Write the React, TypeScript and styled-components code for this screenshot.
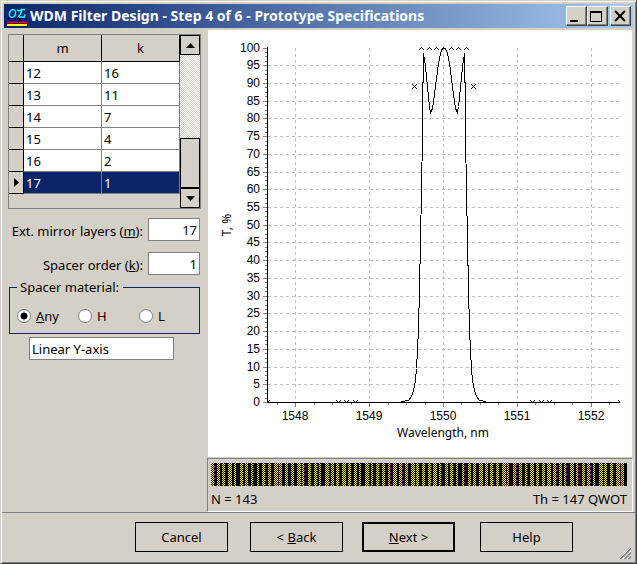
import React, { useState } from "react";
import styled, { createGlobalStyle, css } from "styled-components";

const face = "#d4d0c8";
const shade = "#808080";
const navy = "#0a246a";
const uiFont = `"Noto Sans", "DejaVu Sans", sans-serif`;

const GlobalStyle = createGlobalStyle`
  * { box-sizing: border-box; }
  body { margin: 0; background: ${face}; font: 13px/16px ${uiFont}; color: #000; }
  button, input { font: inherit; color: inherit; }
`;

const Frame = styled.div`
  min-height: 100vh;
  display: flex;
  flex-direction: column;
  padding: 3px 1px 1px 3px;
  border: 1px solid;
  border-color: ${face} #404040 #404040 ${face};
  background: ${face};
  box-shadow: inset 1px 1px #fff, inset -1px -1px ${shade};
`;

const TitleBar = styled.header`
  display: flex;
  align-items: center;
  height: 24px;
  margin-right: 2px;
  padding: 0 2px 0 3px;
  background: linear-gradient(to right, ${navy}, #a6caf0);
`;

const AppIcon = styled.svg`
  width: 20px;
  height: 20px;
  margin-right: 3px;
`;

const Title = styled.h1`
  flex: 1;
  margin: 0;
  color: #fff;
  font: bold 14px/20px ${uiFont};
  white-space: nowrap;
`;

const CaptionButton = styled.button<{ $apart?: boolean }>`
  width: 21px;
  height: 20px;
  margin-left: ${(p) => (p.$apart ? 2 : 0)}px;
  padding: 0;
  border: 1px solid;
  border-color: #fff #404040 #404040 #fff;
  background: ${face};
  box-shadow: inset -1px -1px ${shade};
  svg { display: block; }
`;

const Body = styled.main`
  flex: 1;
  display: flex;
  padding-top: 2px;
  margin-right: 2px;
`;

const SidePanel = styled.section`
  flex: 0 0 203px;
  padding: 4px 6px 0 4px;
`;

const GridBox = styled.div`
  display: flex;
  height: 175px;
  border: 1px solid ${shade};
`;

const LayerTable = styled.table`
  flex: 1;
  align-self: flex-start;
  table-layout: fixed;
  border-collapse: separate;
  border-spacing: 0;
`;

const HeadCell = styled.th<{ $mark?: boolean }>`
  width: ${(p) => (p.$mark ? "15px" : "auto")};
  height: 27px;
  padding: 0;
  border: solid #000;
  border-width: 0 1px 1px 0;
  font-weight: normal;
`;

const MarkCell = styled.td`
  height: 22px;
  padding: 0 0 0 5px;
  border: solid #000;
  border-width: 0 1px 1px 0;
  svg { display: block; }
`;

const Row = styled.tr<{ $selected: boolean }>`
  background: ${(p) => (p.$selected ? navy : "#fff")};
  color: ${(p) => (p.$selected ? "#fff" : "#000")};
  ${MarkCell} { background: ${face}; }
`;

const ValueCell = styled.td`
  padding: 0 2px;
  border: solid ${shade};
  border-width: 0 1px 1px 0;
`;

const ScrollBar = styled.div`
  display: flex;
  flex-direction: column;
  width: 20px;
  background: repeating-conic-gradient(#fff 0 25%, ${face} 0 50%) 0 0 / 2px 2px;
`;

const ScrollButton = styled.button`
  display: grid;
  place-items: center;
  height: 20px;
  padding: 0;
  border: 1px solid #000;
  background: ${face};
`;

const Thumb = styled.div`
  height: 50px;
  margin-top: auto;
  border: 1px solid #000;
  background: ${face};
`;

const Field = styled.label`
  display: flex;
  justify-content: flex-end;
  align-items: center;
  gap: 5px;
  margin: 9px 1px 0 0;
  & + & { margin-top: 11px; }
  span { padding-top: 3px; }
`;

const TextBox = styled.input<{ $wide?: boolean }>`
  height: 23px;
  padding: 0 2px;
  border: 1px solid ${shade};
  border-radius: 0;
  background: #fff;
  ${(p) =>
    p.$wide
      ? css`width: 145px; margin: 3px 0 0 21px;`
      : css`width: 52px; text-align: right;`}
`;

const Group = styled.fieldset`
  display: flex;
  min-width: 0;
  height: 55px;
  margin: 4px 1px 0 1px;
  padding: 13px 0 0 7px;
  border: 1px solid ${navy};
`;

const Legend = styled.legend`
  padding: 0 4px 0 3px;
`;

const Choice = styled.label`
  display: flex;
  align-items: center;
  gap: 5px;
  width: 61px;
  height: 16px;
  &:last-child { width: 50px; }
`;

const Radio = styled.input`
  appearance: none;
  width: 14px;
  height: 14px;
  margin: 0;
  border: 1px solid ${shade};
  border-radius: 50%;
  background: #fff;
  &:checked { background: radial-gradient(circle, #000 3px, #fff 4px); }
`;

const MainPanel = styled.section`
  flex: 1;
  display: flex;
  flex-direction: column;
  min-width: 0;
`;

const ChartArea = styled.div`
  flex: 1;
  margin: 0 1px;
  background: #fff;
`;

const Chart = styled.svg`
  display: block;
  width: 100%;
  font: 12px "Liberation Sans", sans-serif;
`;

const AxisTitle = styled.text`
  font: 12px ${uiFont};
`;

const StackPanel = styled.div`
  margin-top: 1px;
  padding: 4px 5px 2px 3px;
  height: 54px;
  border: solid;
  border-width: 1px;
  border-color: ${shade} #fff #fff ${shade};
`;

const Stack = styled.svg`
  display: block;
  width: 100%;
  height: 23px;
`;

const StackInfo = styled.div`
  display: flex;
  justify-content: space-between;
  margin-top: 5px;
`;

const Footer = styled.footer`
  display: flex;
  height: 50px;
  margin-left: -2px;
  padding: 9px 0 0 133px;
  border-top: 1px solid ${shade};
`;

const Command = styled.button<{ $gap: number; $default?: boolean }>`
  width: 93px;
  height: 30px;
  margin-right: ${(p) => p.$gap}px;
  padding: 0;
  border: ${(p) => (p.$default ? 2 : 1)}px solid #000;
  background: ${face};
`;

const Grip = styled.svg`
  align-self: flex-end;
  width: 12px;
  height: 12px;
  margin: 0 4px 3px auto;
`;

const rows = [[12, 16], [13, 11], [14, 7], [15, 4], [16, 2], [17, 1]];
const materials = [
  { id: "any", label: <><u>A</u>ny</> },
  { id: "h", label: "H" },
  { id: "l", label: "L" },
];

const xOf = (nm: number) => Math.round(235 + (nm - 1550) * 73.9) + 0.5;
const yOf = (t: number) => Math.round(372 - t * 3.545) + 0.5;
const range = (n: number) => Array.from({ length: n }, (_, i) => i);

const leftHalf = [
  [193, 371], [200, 370], [203, 366], [205, 360], [207, 350], [208, 338], [209, 320],
  [210, 298], [211, 258], [212, 210], [213, 160], [214, 105], [214, 52], [215, 52], [215, 23],
  [217, 36], [219, 57], [221, 76], [222, 82], [224, 78], [226, 64], [228, 48],
  [230, 33], [232, 23], [234, 18], [235, 18],
];
const curve = [...leftHalf, ...leftHalf.slice().reverse().map(([x, y]) => [471 - x, y])]
  .map(([x, y]) => `${x + 0.5},${y + 0.5}`)
  .join(" ");

function Spectrum() {
  return (
    <Chart viewBox="0 0 424 427" role="img" aria-label="Transmittance against wavelength">
      <g shapeRendering="crispEdges" fill="none" stroke="#c0c0c0" strokeDasharray="3 3">
        {range(19).map((i) => <path key={i} d={`M60 ${yOf((i + 1) * 5)}H412`} />)}
        {range(5).map((i) => <path key={i} d={`M${xOf(1548 + i)} 18V372`} />)}
      </g>
      <g shapeRendering="crispEdges" fill="none" stroke={shade}>
        {range(81).map((i) => <path key={i} d={`M${i % 4 ? 57 : 55} ${yOf(i * 1.25)}H59`} />)}
        {range(19).map((i) => (
          <path key={i} d={`M${xOf(1547.75 + i * 0.25)} 373v${i % 4 === 1 ? 4 : 2}`} />
        ))}
      </g>
      <g shapeRendering="crispEdges" fill="none" stroke="#000">
        <path d="M59.5 17V372.5H412" />
        <polyline points={curve} />
        {[213, 221, 228, 235, 243, 250, 258].map((x) => (
          <path key={x} d={`M${x - 2} 19.5h1m0-1h1m0-1h1m0 1h1m0 1h1`} />
        ))}
        {[206, 265].map((x) => (
          <path key={x} d={`M${x - 2} 54.5h1m3 0h1m-4 1h1m1 0h1m-2 1h1m-2 1h1m1 0h1m-4 1h1m3 0h1`} />
        ))}
        {[130, 138, 147, 324, 333, 341].map((x) => (
          <path key={x} d={`M${x - 2} 370.5h1m3 0h1m-4 1h1m1 0h1`} />
        ))}
        <path d="M61 370.5h1m-2 1h1M410 370.5h1m0 1h1" />
      </g>
      <g textAnchor="end">
        {range(21).map((i) => (
          <text key={i} x="52" y={yOf(i * 5) + 3.5}>{i * 5}</text>
        ))}
      </g>
      <g textAnchor="middle">
        {range(5).map((i) => (
          <text key={i} x={xOf(1548 + i) - 0.5} y="390">{1548 + i}</text>
        ))}
        <AxisTitle x="235" y="407">Wavelength, nm</AxisTitle>
        <AxisTitle transform="translate(23 195) rotate(-90)">T, %</AxisTitle>
      </g>
    </Chart>
  );
}

const lowWidths = [3, 3, 3, 4, 2, 3, 3, 2, 4, 3, 3, 4];

function LayerStack() {
  return (
    <Stack viewBox="0 0 416 23" preserveAspectRatio="none" shapeRendering="crispEdges" aria-label="Layer stack">
      <defs>
        <pattern id="low" width="2" height="2" patternUnits="userSpaceOnUse">
          <path fill="#ff0" d="M0 0h1v1H0zM1 1h1v1H1z" />
        </pattern>
      </defs>
      <rect width="416" height="23" fill="#000" />
      {range(73).map((i) => {
        const x = Math.round(i * 5.7);
        const spacer = i % 18 === 8;
        const low = spacer ? 2 : lowWidths[i % 12];
        return (
          <React.Fragment key={i}>
            <rect x={x} width={low} height="23" fill="url(#low)" />
            {(i * 5) % 11 < 4 && (
              <path d={`M${x + low + 0.5} ${i % 2 ? 1 : 3}V23`} stroke="#f0f" strokeDasharray="1 3" />
            )}
          </React.Fragment>
        );
      })}
    </Stack>
  );
}

export default function App() {
  const [selected, setSelected] = useState(5);
  return (
    <>
      <GlobalStyle />
      <Frame>
        <TitleBar>
          <AppIcon viewBox="0 0 20 20" aria-hidden="true">
            <path fill="#000" d="M0 12h20v8H0z" />
            <path fill="#00f" d="M0 13h20v2H0z" />
            <path fill="#f00" d="M0 15.500h20v2H0z" />
            <path fill="#ff0" d="M0 18h20v2H0z" />
            <ellipse cx="5.500" cy="7.500" rx="3" ry="4" fill="none" stroke="#0ff" strokeWidth="1.500" transform="rotate(15 5.500 7.500)" />
            <path fill="none" stroke="#0ff" strokeWidth="1.500" d="M18 3.500h-3q-1 5-4 8q3-1 6 0l1-3M10 4q2 2 5-1" />
            <path stroke="#000" d="M11.500 11v7" />
          </AppIcon>
          <Title>WDM Filter Design - Step 4 of 6 - Prototype Specifications</Title>
          <CaptionButton aria-label="Minimize">
            <svg width="19" height="18"><path d="M3 13h8v2H3z" /></svg>
          </CaptionButton>
          <CaptionButton aria-label="Maximize">
            <svg width="19" height="18"><path fillRule="evenodd" d="M2 4h12v11H2zM3 6v8h10V6z" /></svg>
          </CaptionButton>
          <CaptionButton $apart aria-label="Close">
            <svg width="19" height="18"><path stroke="#000" strokeWidth="2" d="M4 4l10 10M14 4L4 14" /></svg>
          </CaptionButton>
        </TitleBar>
        <Body>
          <SidePanel>
            <GridBox>
              <LayerTable>
                <thead>
                  <tr><HeadCell $mark /><HeadCell>m</HeadCell><HeadCell>k</HeadCell></tr>
                </thead>
                <tbody>
                  {rows.map(([m, k], i) => (
                    <Row key={m} $selected={i === selected} onClick={() => setSelected(i)}>
                      <MarkCell>
                        {i === selected && <svg width="5" height="9"><path d="M0 0l5 4.500L0 9z" /></svg>}
                      </MarkCell>
                      <ValueCell>{m}</ValueCell>
                      <ValueCell>{k}</ValueCell>
                    </Row>
                  ))}
                </tbody>
              </LayerTable>
              <ScrollBar>
                <ScrollButton aria-label="Scroll up">
                  <svg width="9" height="5"><path d="M0 5l4.500-5L9 5z" /></svg>
                </ScrollButton>
                <Thumb />
                <ScrollButton aria-label="Scroll down">
                  <svg width="9" height="5"><path d="M0 0h9L4.500 5z" /></svg>
                </ScrollButton>
              </ScrollBar>
            </GridBox>
            <Field><span>Ext. mirror layers (<u>m</u>):</span><TextBox defaultValue="17" /></Field>
            <Field><span>Spacer order (<u>k</u>):</span><TextBox defaultValue="1" /></Field>
            <Group>
              <Legend>Spacer material:</Legend>
              {materials.map(({ id, label }) => (
                <Choice key={id}>
                  <Radio type="radio" name="material" value={id} defaultChecked={id === "any"} />
                  <span>{label}</span>
                </Choice>
              ))}
            </Group>
            <TextBox $wide aria-label="Axis type" defaultValue="Linear Y-axis" />
          </SidePanel>
          <MainPanel>
            <ChartArea><Spectrum /></ChartArea>
            <StackPanel>
              <LayerStack />
              <StackInfo><span>N = 143</span><span>Th = 147 QWOT</span></StackInfo>
            </StackPanel>
          </MainPanel>
        </Body>
        <Footer>
          <Command $gap={22}>Cancel</Command>
          <Command $gap={19}>&lt; <u>B</u>ack</Command>
          <Command $gap={25} $default><u>N</u>ext &gt;</Command>
          <Command $gap={0}>Help</Command>
          <Grip viewBox="0 0 12 12" aria-hidden="true">
            <path stroke={shade} strokeWidth="2" d="M1 12L12 1M5 12l7-7M9 12l3-3" />
            <path stroke="#fff" d="M0 12L12 0M4 12l8-8M8 12l4-4" />
          </Grip>
        </Footer>
      </Frame>
    </>
  );
}
